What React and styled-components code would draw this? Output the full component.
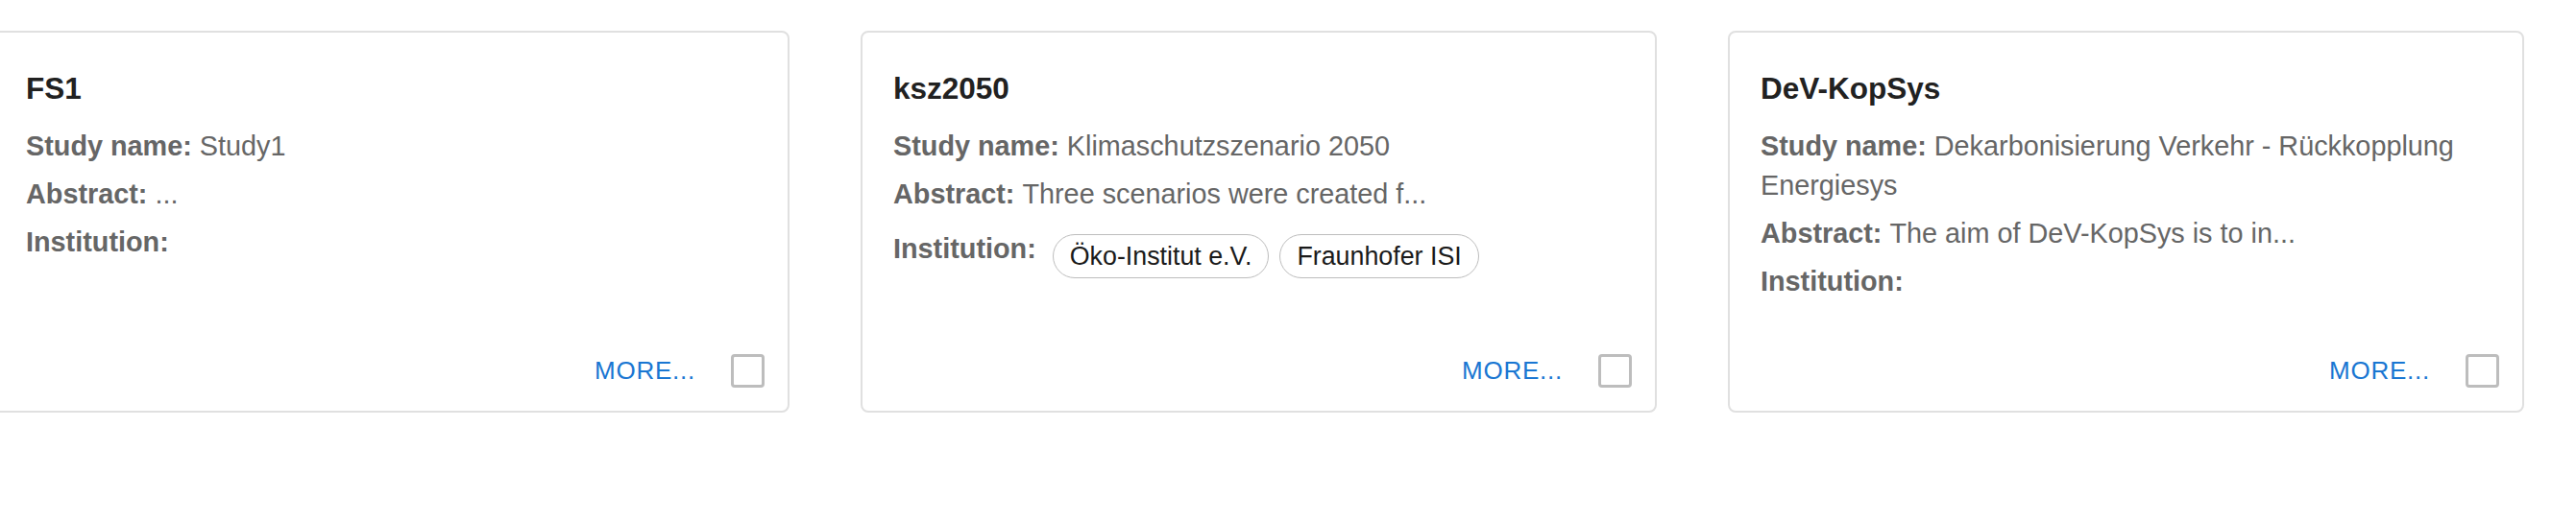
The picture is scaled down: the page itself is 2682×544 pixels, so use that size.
import styled, { createGlobalStyle } from "styled-components";

const studies = [
    {
        id: "FS1",
        name: "Study1",
        abstract: "...",
        institutions: [],
    },
    {
        id: "ksz2050",
        name: "Klimaschutzszenario 2050",
        abstract: "Three scenarios were created f...",
        institutions: ["Öko-Institut e.V.", "Fraunhofer ISI"],
    },
    {
        id: "DeV-KopSys",
        name: "Dekarbonisierung Verkehr - Rückkopplung Energiesys",
        abstract: "The aim of DeV-KopSys is to in...",
        institutions: [],
    },
];

export default function App() {
    return (
        <>
            <GlobalStyle />
            <Row>
                {studies.map((study) => (
                    <Card key={study.id}>
                        <Content>
                            <Title>{study.id}</Title>
                            <Field>
                                <Label>Study name: </Label>
                                <Value>{study.name}</Value>
                            </Field>
                            <Field>
                                <Label>Abstract: </Label>
                                <Value>{study.abstract}</Value>
                            </Field>
                            <InstitutionRow>
                                <Label $offset={study.institutions.length > 0}>Institution:</Label>
                                {study.institutions.length > 0 && (
                                    <Chips>
                                        {study.institutions.map((inst) => (
                                            <Chip key={inst}>{inst}</Chip>
                                        ))}
                                    </Chips>
                                )}
                            </InstitutionRow>
                        </Content>
                        <Footer>
                            <MoreButton>More...</MoreButton>
                            <Checkbox type="checkbox" aria-label={`select ${study.id}`} />
                        </Footer>
                    </Card>
                ))}
            </Row>
        </>
    );
}

const GlobalStyle = createGlobalStyle`
    body {
        margin: 0;
        background: #ffffff;
        font-family: "Liberation Sans", Arial, sans-serif;
        overflow: hidden;
    }
`;

const Row = styled.div`
    display: flex;
    gap: 74px;
    padding-top: 32px;
    margin-left: -7px;
`;

const Card = styled.div`
    flex: 0 0 829px;
    height: 398px;
    box-sizing: border-box;
    border: 2px solid #e0e0e0;
    border-radius: 8px;
    display: flex;
    flex-direction: column;
`;

const Content = styled.div`
    padding: 34px 32px 0;
`;

const Title = styled.h2`
    margin: 0 0 16px;
    font-size: 31.5px;
    line-height: 48px;
    font-weight: 700;
    color: #212121;
`;

const Field = styled.p`
    margin: 0 0 9px;
    font-size: 28.8px;
    line-height: 41px;
    color: #666666;
`;

const Label = styled.b`
    font-weight: 700;
    color: #666666;
    margin-top: ${(p) => (p.$offset ? "7px" : "0")};
`;

const Value = styled.span`
    color: #666666;
`;

const InstitutionRow = styled.div`
    display: flex;
    align-items: flex-start;
    gap: 17px;
    font-size: 28.8px;
    line-height: 41px;
`;

const Chips = styled.div`
    display: flex;
    gap: 11px;
    margin-top: 12px;
`;

const Chip = styled.span`
    display: inline-flex;
    align-items: center;
    height: 46px;
    box-sizing: border-box;
    padding: 0 17px;
    border: 1.5px solid #bdbdbd;
    border-radius: 23px;
    font-size: 26.8px;
    color: #1a1a1a;
    white-space: nowrap;
`;

const Footer = styled.div`
    margin-top: auto;
    display: flex;
    justify-content: flex-end;
    align-items: center;
    gap: 37px;
    padding: 0 24px 24px 0;
`;

const MoreButton = styled.button`
    border: none;
    background: none;
    padding: 0;
    font-family: "Liberation Sans", Arial, sans-serif;
    font-size: 26px;
    letter-spacing: 0.75px;
    text-transform: uppercase;
    color: #1976d2;
    cursor: pointer;
`;

const Checkbox = styled.input`
    appearance: none;
    margin: 0;
    width: 35px;
    height: 35px;
    box-sizing: border-box;
    border: 3.5px solid #bdbdbd;
    border-radius: 4px;
    cursor: pointer;
`;
